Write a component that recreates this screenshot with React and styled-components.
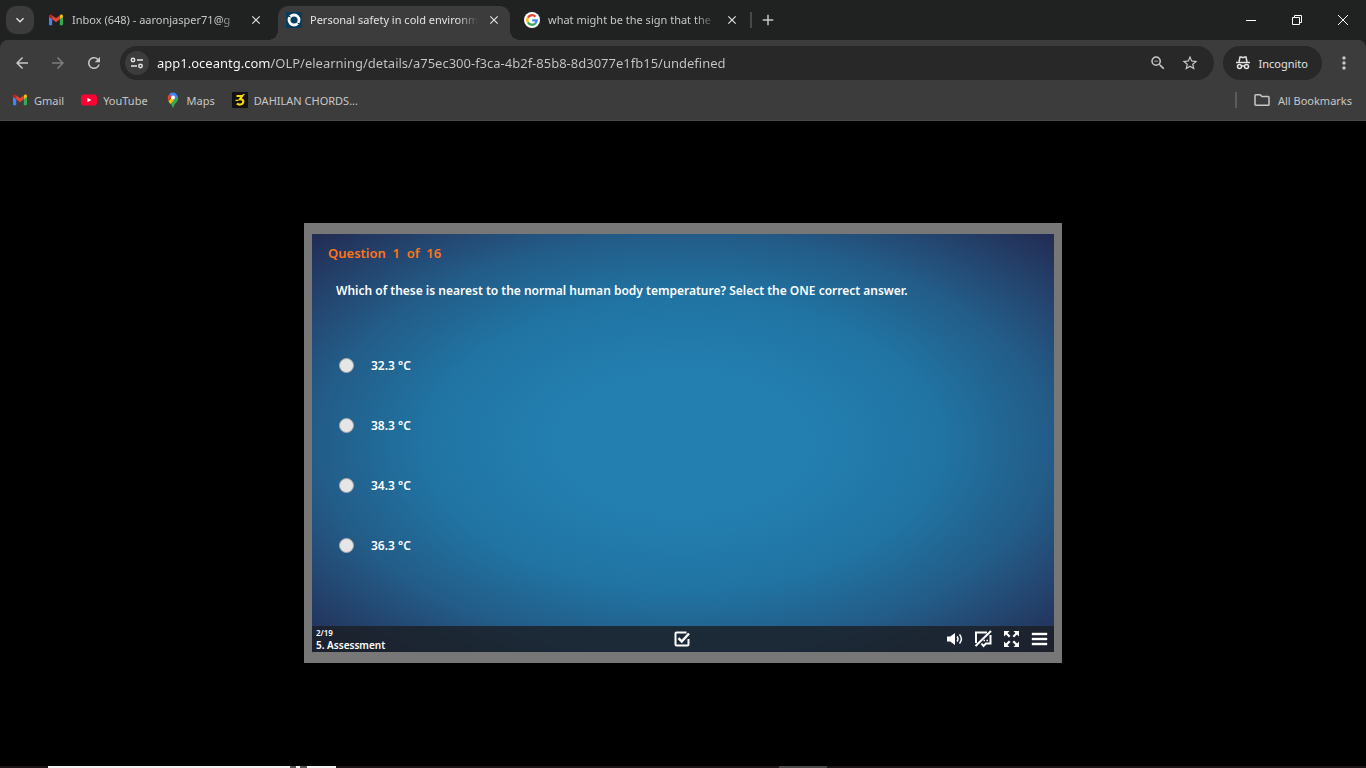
import React from "react";
import styled, { createGlobalStyle } from "styled-components";
import {
    MdArrowBack,
    MdArrowForward,
    MdRefresh,
    MdStarBorder,
    MdMoreVert,
    MdZoomOut,
    MdClose,
    MdAdd,
    MdKeyboardArrowDown
} from "react-icons/md";

const GlobalStyle = createGlobalStyle`
    * {
        box-sizing: border-box;
    }
    body {
        margin: 0;
        background: #000;
        font-family: "Noto Sans", "Open Sans", sans-serif;
        font-size: 11px;
    }
    button {
        border: 0;
        padding: 0;
        background: none;
        color: inherit;
        font: inherit;
    }
    svg {
        display: block;
        flex: none;
    }
`;

const Page = styled.div`
    min-height: 100vh;
    display: flex;
    flex-direction: column;
`;

const TabStrip = styled.div`
    height: 40px;
    display: flex;
    background: #202221;
    color: #c7c7c7;
`;

const TabSearch = styled.button`
    width: 28px;
    height: 28px;
    margin: 6px;
    display: flex;
    align-items: center;
    justify-content: center;
    border-radius: 10px;
    background: #3c3c3c;
    color: #e3e3e3;
`;

const Tabs = styled.div`
    display: flex;
    gap: 6px;
    padding-top: 6px;
`;

const Tab = styled.div`
    position: relative;
    width: 232px;
    height: 34px;
    padding: 0 8px 6px;
    display: flex;
    align-items: center;
    gap: 8px;
    border-radius: 10px 10px 0 0;
    background: ${props => props.$active ? "#3c3c3c" : "transparent"};
    color: ${props => props.$active ? "#e3e3e3" : "#c7c7c7"};
    &::before,
    &::after {
        content: "";
        display: ${props => props.$active ? "block" : "none"};
        position: absolute;
        bottom: 0;
        width: 10px;
        height: 10px;
    }
    &::before {
        left: -10px;
        background: radial-gradient(circle at 0 0, transparent 10px, #3c3c3c 10px);
    }
    &::after {
        right: -10px;
        background: radial-gradient(circle at 100% 0, transparent 10px, #3c3c3c 10px);
    }
`;

const TabTitle = styled.span`
    flex: 1;
    overflow: hidden;
    white-space: nowrap;
    line-height: 18px;
    mask-image: linear-gradient(90deg, #000 88%, transparent);
`;

const TabClose = styled.button`
    width: 16px;
    height: 16px;
    display: flex;
    align-items: center;
    justify-content: center;
    color: #e3e3e3;
`;

const TabDivider = styled.span`
    width: 2px;
    height: 16px;
    margin: 12px 2px;
    background: #47484a;
`;

const NewTab = styled.button`
    width: 28px;
    height: 28px;
    margin-top: 6px;
    display: flex;
    align-items: center;
    justify-content: center;
`;

const WindowButtons = styled.div`
    display: flex;
    margin-left: auto;
    color: #fff;
`;

const WindowButton = styled.button`
    width: 46px;
    display: flex;
    align-items: center;
    justify-content: center;
`;

const ChromeBody = styled.div`
    background: #202221;
`;

const Toolbar = styled.div`
    display: flex;
    align-items: center;
    gap: 2px;
    padding: 6px 5px;
    border-radius: 8px 8px 0 0;
    background: #3c3c3c;
    color: #c7c7c7;
`;

const ToolButton = styled.button`
    width: 34px;
    height: 34px;
    display: flex;
    align-items: center;
    justify-content: center;
    color: ${props => props.disabled ? "#7d7d7d" : "#c7c7c7"};
`;

const Omnibox = styled.div`
    flex: 1;
    height: 34px;
    margin: 0 7px;
    padding: 0 8px 0 5px;
    display: flex;
    align-items: center;
    border-radius: 17px;
    background: #282828;
`;

const SiteInfo = styled.button`
    width: 24px;
    height: 24px;
    margin-right: 8px;
    display: flex;
    align-items: center;
    justify-content: center;
    border-radius: 50%;
    background: #3c3c3c;
    color: #e3e3e3;
`;

/* the host part of the address is brighter than its path */
const Address = styled.input`
    flex: 1;
    min-width: 0;
    height: 24px;
    border: 0;
    padding: 0;
    outline: 0;
    font: 13px "Noto Sans", "Open Sans", sans-serif;
    color: #c7c7c7;
    background: linear-gradient(90deg, #fff 114px, #c7c7c7 114px);
    background-clip: text;
    -webkit-text-fill-color: transparent;
`;

const OmniboxButton = styled.button`
    width: 32px;
    height: 32px;
    display: flex;
    align-items: center;
    justify-content: center;
`;

const Incognito = styled.button`
    height: 34px;
    margin-right: 3px;
    padding: 0 14px 0 12px;
    display: flex;
    align-items: center;
    gap: 8px;
    border-radius: 17px;
    background: #282828;
    color: #e3e3e3;
`;

const BookmarksBar = styled.nav`
    display: flex;
    align-items: center;
    gap: 17px;
    padding: 0 14px 6px 12px;
    border-bottom: 1px solid #4a4a4a;
    background: #3c3c3c;
`;

const Bookmark = styled.a`
    height: 28px;
    display: flex;
    align-items: center;
    gap: ${props => props.$folder ? "8px" : "6px"};
    color: #c7c7c7;
    text-decoration: none;
`;

const BookmarkDivider = styled.span`
    width: 2px;
    height: 16px;
    margin-left: auto;
    background: #5c5c5c;
`;

const Main = styled.main`
    flex: 1;
    display: flex;
    align-items: center;
    justify-content: center;
    padding-bottom: 1px;
`;

const Player = styled.section`
    width: 100%;
    max-width: 758px;
    min-height: 440px;
    display: flex;
    border: solid #777;
    border-width: 11px 8px;
    font-weight: 600;
    color: #fff;
`;

const Slide = styled.form`
    flex: 1;
    display: flex;
    flex-direction: column;
    background: radial-gradient(#237fb0 24%, #2074a3 49%, #235c88 70%, #232b52);
`;

const Counter = styled.h1`
    margin: 9px 16px 0;
    font-size: 13px;
    font-weight: 600;
    line-height: 20px;
    color: #ff7417;
`;

const Question = styled.p`
    margin: 18px 24px 34px;
    font-size: 12px;
    line-height: 20px;
`;

const Answer = styled.label`
    height: 60px;
    padding-left: 27px;
    display: flex;
    align-items: center;
    gap: 17px;
    font-size: 12px;
`;

const Radio = styled.input`
    appearance: none;
    width: 15px;
    height: 15px;
    margin: 0;
    border: 1px solid #a8a8a8;
    border-radius: 50%;
    background: #e6e6e6;
    &:checked {
        border: 4px solid #e6e6e6;
        background: #235c88;
    }
`;

const Controls = styled.footer`
    height: 26px;
    margin-top: auto;
    padding: 0 6px 1px 4px;
    display: grid;
    grid-template-columns: 1fr auto 1fr;
    align-items: center;
    background: rgba(27, 31, 37, 0.82);
`;

const Progress = styled.div`
    font-size: 10px;
    line-height: 12px;
`;

const SlideNumber = styled.div`
    font-size: 8px;
`;

const ControlGroup = styled.div`
    display: flex;
    align-items: center;
    justify-content: flex-end;
    gap: 11px;
`;

const Taskbar = styled.div`
    height: 2px;
    display: flex;
    background: #1b1517;
`;

const TaskbarItem = styled.span`
    width: ${props => props.$width}px;
    background: ${props => props.$color || "transparent"};
`;

const GmailIcon = () => (
    <svg width="16" height="16" viewBox="0 0 16 16">
        <path d="M1 4.200V12.300c0 .6.400 1 1 1h2.200V7z" fill="#4285f4" />
        <path d="M15 4.200v8.100c0 .6-.4 1-1 1h-2.200V7z" fill="#34a853" />
        <path d="M1 4.200c0-1.500 1.700-2 2.700-1.200l.5.4V7.200L1 4.900z" fill="#c5221f" />
        <path d="M15 4.200c0-1.500-1.700-2-2.700-1.200l-.5.4V7.200L15 4.900z" fill="#fbbc04" />
        <path d="M4.200 3.400L8 6.300l3.800-2.900v3.900L8 10.200 4.200 7.300z" fill="#ea4335" />
    </svg>
);

const OceanIcon = () => (
    <svg width="16" height="16" viewBox="0 0 16 16">
        <rect width="16" height="16" fill="#073d5c" />
        <circle cx="8" cy="8" r="5" fill="none" stroke="#fff" strokeWidth="2.800" />
        <path d="M2.500 4l2 1M11.500 11l2 1" stroke="#073d5c" strokeWidth="1" />
    </svg>
);

const GoogleIcon = () => (
    <svg width="16" height="16" viewBox="0 0 16 16">
        <circle cx="8" cy="8" r="8" fill="#fff" />
        <g fill="none" strokeWidth="2.300">
            <path d="M11.500 4.700A4.800 4.800 0 0 0 3.900 5.600" stroke="#ea4335" />
            <path d="M3.900 5.600a4.800 4.800 0 0 0 0 4.800" stroke="#fbbc04" />
            <path d="M3.900 10.400a4.800 4.800 0 0 0 7.200 1.200" stroke="#34a853" />
            <path d="M11.100 11.600A4.800 4.800 0 0 0 12.700 8.300H8.200" stroke="#4285f4" />
        </g>
    </svg>
);

const YouTubeIcon = () => (
    <svg width="16" height="16" viewBox="0 0 16 16">
        <rect y="2.500" width="16" height="11" rx="2.800" fill="#ff0033" />
        <path d="M6.400 5.800v4.400L10.300 8z" fill="#fff" />
    </svg>
);

const MapsIcon = () => (
    <svg width="16" height="16" viewBox="0 0 16 16">
        <path d="M3.300 8.800C4.500 11.200 7 12 7.300 15c.1.700 1.300.7 1.400 0 .3-3 2.800-4 3.900-6.200.8-1.700.7-3.300 0-4.600z" fill="#34a853" />
        <path d="M3.500 9.300L8 4l2 3-4.700 5C4.700 11 3.900 10.300 3.500 9.300z" fill="#fbbc04" />
        <path d="M4.300 2.200C6.300-.2 10.800-.1 12.600 4.200L8.500 8.500 6 4.500z" fill="#4285f4" />
        <path d="M4.300 2.200l2.700 2.300-3.800 4.300C2.300 6.500 2.700 3.800 4.300 2.200z" fill="#ea4335" />
        <circle cx="8" cy="5.600" r="2" fill="#fff" />
    </svg>
);

const ChordsIcon = () => (
    <svg width="16" height="16" viewBox="0 0 16 16">
        <rect width="16" height="16" rx="1" fill="#111" />
        <path d="M4.500 4h5.500L8 7.200c3.200 0 4 2 2.900 3.800-1 1.700-4.200 2.200-6 .5" fill="none" stroke="#f5d90a" strokeWidth="2.200" />
        <path d="M3.500 8.300h3M10 3.500l2.500-1.200" stroke="#f5d90a" strokeWidth="1.200" />
    </svg>
);

const FolderIcon = () => (
    <svg width="16" height="16" viewBox="0 0 16 16" fill="none" stroke="#c7c7c7" strokeWidth="1.500">
        <path d="M1.800 2.800h4.400l1.700 1.700h6.300c.4 0 .8.300.8.800v7.200c0 .4-.4.800-.8.800H1.800c-.4 0-.8-.4-.8-.8V3.600c0-.4.400-.8.8-.8z" />
    </svg>
);

const SiteInfoIcon = () => (
    <svg width="14" height="14" viewBox="0 0 14 14" fill="none" stroke="currentColor" strokeWidth="1.500">
        <circle cx="3" cy="4" r="1.700" />
        <circle cx="10.500" cy="10" r="1.700" />
        <path d="M7 4h6M1 10h6" />
    </svg>
);

const IncognitoIcon = () => (
    <svg width="16" height="16" viewBox="0 0 16 16" fill="none" stroke="currentColor" strokeWidth="1.500">
        <path d="M1 7.500h14" />
        <path d="M4 7l1-5h1.300L8 2.600 9.700 2H11l1 5" />
        <circle cx="4.500" cy="11.500" r="2" />
        <circle cx="11.500" cy="11.500" r="2" />
        <path d="M6.500 11.200c1-.6 2-.6 3 0" />
    </svg>
);

const CheckIcon = () => (
    <svg width="16" height="16" viewBox="0 0 16 16" fill="none" stroke="#fff" strokeWidth="2">
        <path d="M12.500 1.500h-10c-.6 0-1 .4-1 1v11c0 .6.400 1 1 1h11c.6 0 1-.4 1-1V8" />
        <path d="M4.500 7.200l3.200 3.300 7.300-8" strokeWidth="2.500" />
    </svg>
);

const VolumeIcon = () => (
    <svg width="17" height="16" viewBox="0 0 17 16">
        <path d="M1 5.500h3.200L9 2v12l-4.800-3.500H1z" fill="#fff" />
        <path d="M11 5.500c1.200 1.500 1.200 3.500 0 5M13.500 3.500c2.300 2.700 2.300 6.300 0 9" fill="none" stroke="#fff" strokeWidth="1.500" />
    </svg>
);

const CaptionsOffIcon = () => (
    <svg width="18" height="18" viewBox="0 0 18 18" fill="none" stroke="#fff" strokeWidth="2">
        <path d="M13 2.500H2V13M16.500 5v8.500H12L9.500 16l-2-2.500" />
        <path d="M1.500 16L17 1" />
        <path d="M9.500 10.500h1.500M12.500 10.500h1.500" strokeWidth="1.500" />
    </svg>
);

const ExpandIcon = () => (
    <svg width="17" height="16" viewBox="0 0 17 16">
        <path d="M1 0h5.500L1 5.500zM16 0h-5.500L16 5.500zM1 16h5.500L1 10.500zM16 16h-5.500l5.500-5.500z" fill="#fff" />
        <path d="M2.500 1.500L6.700 5.700M14.500 1.500l-4.200 4.200M2.500 14.500l4.200-4.200M14.500 14.500l-4.200-4.200" stroke="#fff" strokeWidth="2.200" />
    </svg>
);

const MenuIcon = () => (
    <svg width="17" height="16" viewBox="0 0 17 16">
        <path d="M1 2h15v2H1zM1 7h15v2H1zM1 12h15v2H1z" fill="#fff" stroke="#fff" strokeWidth=".4" />
    </svg>
);

const tabs = [
    { title: "Inbox (648) - aaronjasper71@g", icon: <GmailIcon /> },
    { title: "Personal safety in cold environm", icon: <OceanIcon />, active: true },
    { title: "what might be the sign that the", icon: <GoogleIcon /> }
];

const bookmarks = [
    { name: "Gmail", icon: <GmailIcon /> },
    { name: "YouTube", icon: <YouTubeIcon /> },
    { name: "Maps", icon: <MapsIcon /> },
    { name: "DAHILAN CHORDS...", icon: <ChordsIcon /> }
];

const answers = ["32.3 °C", "38.3 °C", "34.3 °C", "36.3 °C"];

const taskbarItems = [
    { width: 48 },
    { width: 242, color: "#f2f2f2" },
    { width: 6, color: "#555" },
    { width: 4, color: "#f2f2f2" },
    { width: 7, color: "#555" },
    { width: 29, color: "#f2f2f2" },
    { width: 443 },
    { width: 48, color: "#4a4849" }
];

const Browser = () => (
    <header>
        <TabStrip>
            <TabSearch aria-label="Search tabs">
                <MdKeyboardArrowDown size={16} />
            </TabSearch>
            <Tabs>
                {tabs.map(tab => (
                    <Tab key={tab.title} $active={tab.active}>
                        {tab.icon}
                        <TabTitle>{tab.title}</TabTitle>
                        <TabClose aria-label="Close tab">
                            <MdClose size={14} />
                        </TabClose>
                    </Tab>
                ))}
            </Tabs>
            <TabDivider />
            <NewTab aria-label="New tab">
                <MdAdd size={18} />
            </NewTab>
            <WindowButtons>
                <WindowButton aria-label="Minimize">
                    <svg width="10" height="10" viewBox="0 0 10 10" stroke="#fff">
                        <path d="M0 5.500h10" />
                    </svg>
                </WindowButton>
                <WindowButton aria-label="Restore">
                    <svg width="10" height="10" viewBox="0 0 10 10" fill="none" stroke="#fff">
                        <path d="M.5 2.500h7v7h-7zM2.500 2.500v-2h7v7h-2" />
                    </svg>
                </WindowButton>
                <WindowButton aria-label="Close">
                    <svg width="10" height="10" viewBox="0 0 10 10" stroke="#fff">
                        <path d="M0 0l10 10M10 0L0 10" />
                    </svg>
                </WindowButton>
            </WindowButtons>
        </TabStrip>
        <ChromeBody>
            <Toolbar>
                <ToolButton aria-label="Back">
                    <MdArrowBack size={18} />
                </ToolButton>
                <ToolButton aria-label="Forward" disabled>
                    <MdArrowForward size={18} />
                </ToolButton>
                <ToolButton aria-label="Reload">
                    <MdRefresh size={18} />
                </ToolButton>
                <Omnibox>
                    <SiteInfo aria-label="Site information">
                        <SiteInfoIcon />
                    </SiteInfo>
                    <Address
                        aria-label="Address"
                        defaultValue="app1.oceantg.com/OLP/elearning/details/a75ec300-f3ca-4b2f-85b8-8d3077e1fb15/undefined"
                    />
                    <OmniboxButton aria-label="Zoom">
                        <MdZoomOut size={18} />
                    </OmniboxButton>
                    <OmniboxButton aria-label="Bookmark this tab">
                        <MdStarBorder size={18} />
                    </OmniboxButton>
                </Omnibox>
                <Incognito>
                    <IncognitoIcon />
                    Incognito
                </Incognito>
                <ToolButton aria-label="Menu">
                    <MdMoreVert size={20} />
                </ToolButton>
            </Toolbar>
            <BookmarksBar>
                {bookmarks.map(bookmark => (
                    <Bookmark key={bookmark.name} href="#">
                        {bookmark.icon}
                        {bookmark.name}
                    </Bookmark>
                ))}
                <BookmarkDivider />
                <Bookmark href="#" $folder>
                    <FolderIcon />
                    All Bookmarks
                </Bookmark>
            </BookmarksBar>
        </ChromeBody>
    </header>
);

const Quiz = () => (
    <Player>
        <Slide>
            <Counter>Question&nbsp; 1&nbsp; of&nbsp; 16</Counter>
            <Question>
                Which of these is nearest to the normal human body temperature? Select the ONE correct answer.
            </Question>
            {answers.map(answer => (
                <Answer key={answer}>
                    <Radio type="radio" name="answer" value={answer} />
                    {answer}
                </Answer>
            ))}
            <Controls>
                <Progress>
                    <SlideNumber>2/19</SlideNumber>
                    5. Assessment
                </Progress>
                <button type="button" aria-label="Submit">
                    <CheckIcon />
                </button>
                <ControlGroup>
                    <button type="button" aria-label="Volume">
                        <VolumeIcon />
                    </button>
                    <button type="button" aria-label="Captions">
                        <CaptionsOffIcon />
                    </button>
                    <button type="button" aria-label="Full screen">
                        <ExpandIcon />
                    </button>
                    <button type="button" aria-label="Contents">
                        <MenuIcon />
                    </button>
                </ControlGroup>
            </Controls>
        </Slide>
    </Player>
);

const App = () => (
    <Page>
        <GlobalStyle />
        <Browser />
        <Main>
            <Quiz />
        </Main>
        <Taskbar>
            {taskbarItems.map((item, index) => (
                <TaskbarItem key={index} $width={item.width} $color={item.color} />
            ))}
        </Taskbar>
    </Page>
);

export default App;
